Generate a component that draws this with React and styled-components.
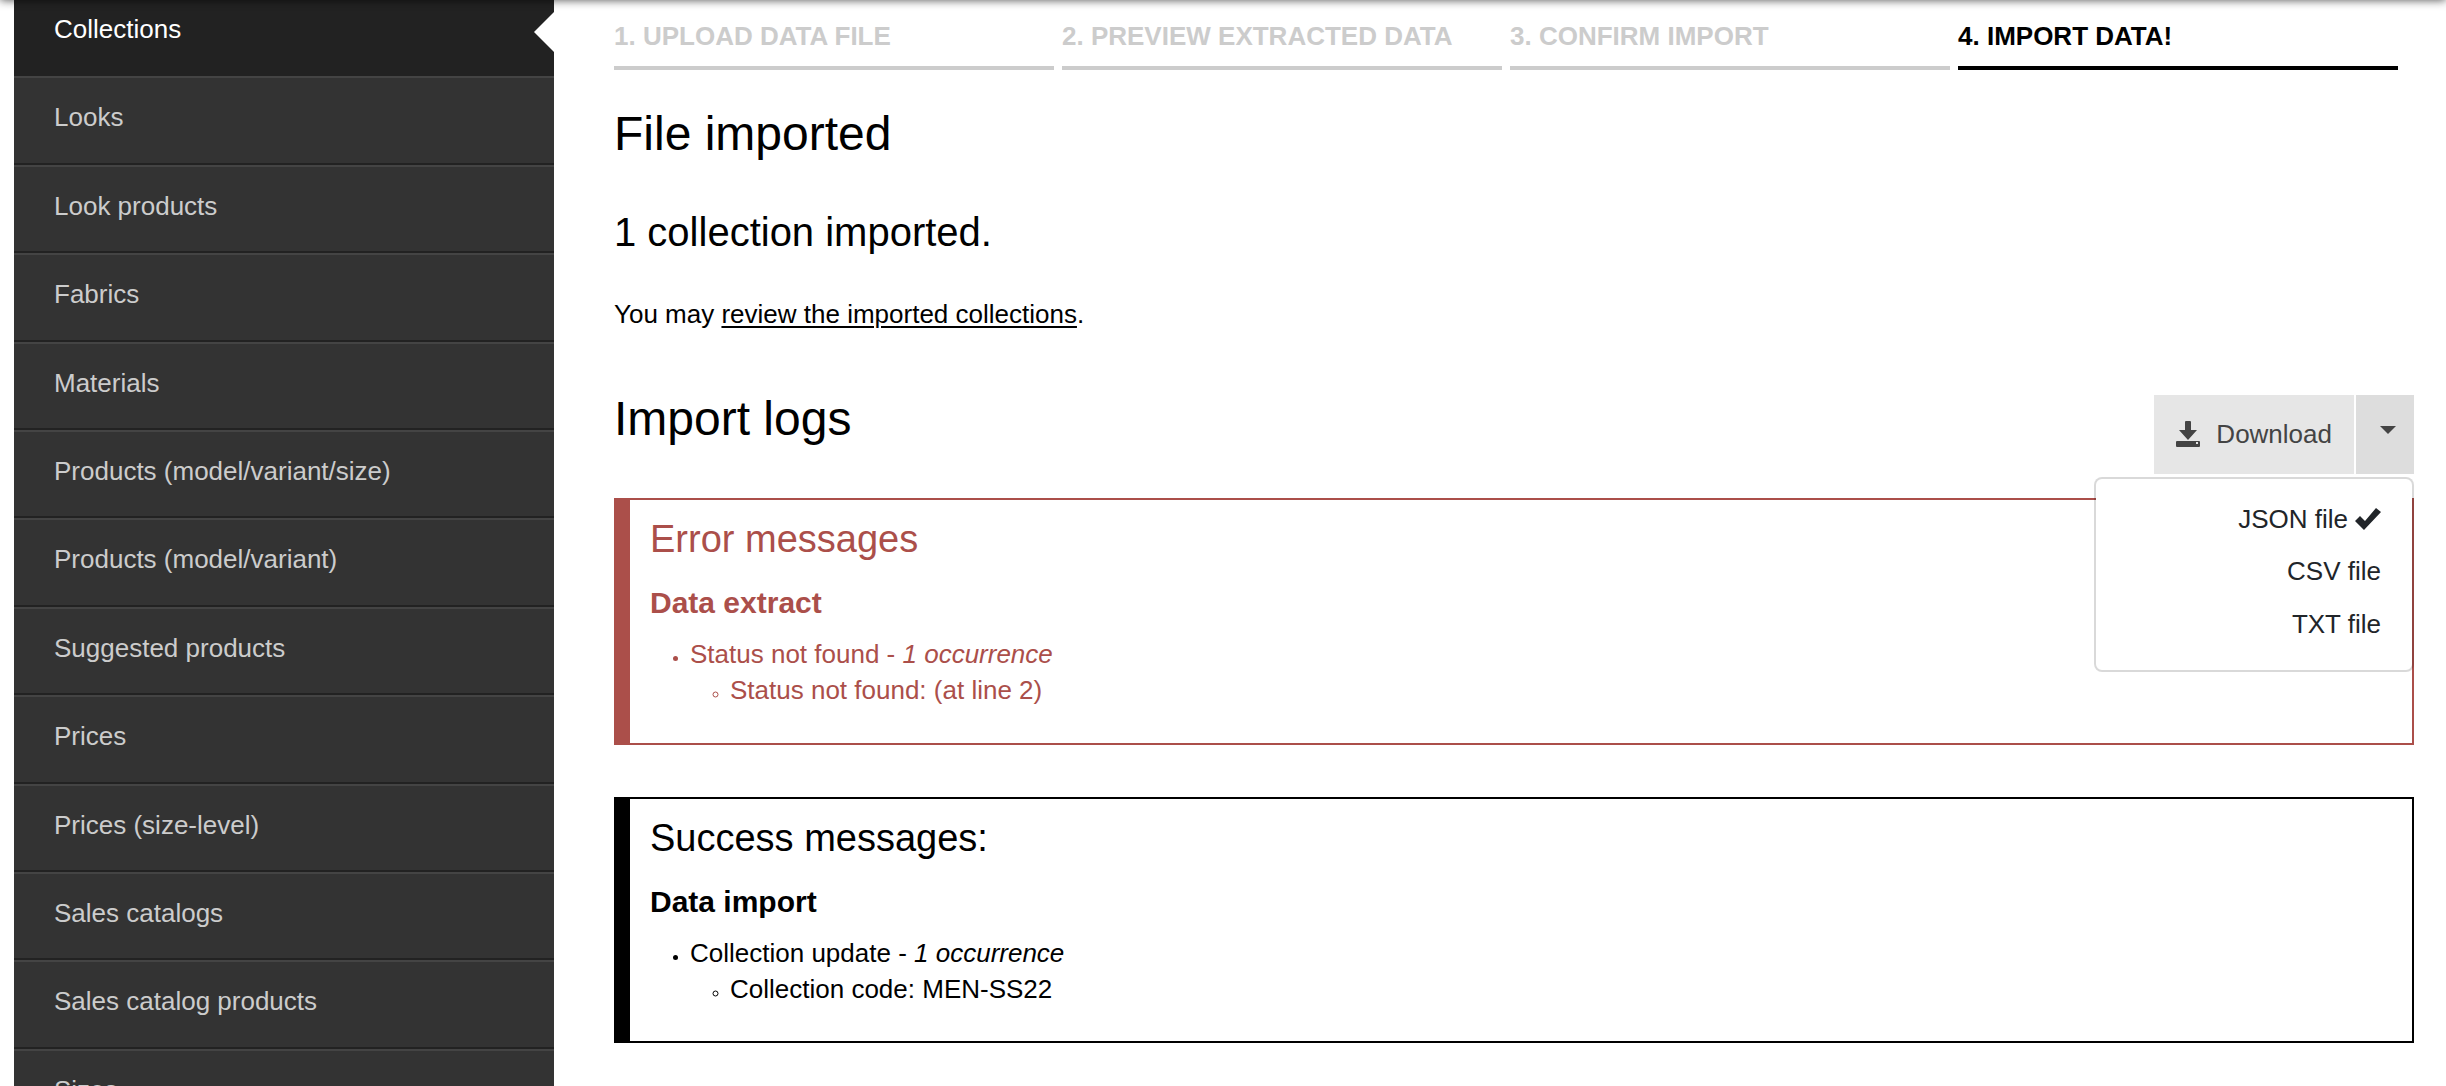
import styled, { createGlobalStyle } from "styled-components";

const navItems = [
  "Collections",
  "Looks",
  "Look products",
  "Fabrics",
  "Materials",
  "Products (model/variant/size)",
  "Products (model/variant)",
  "Suggested products",
  "Prices",
  "Prices (size-level)",
  "Sales catalogs",
  "Sales catalog products",
  "Sizes",
];

const steps = [
  "1. Upload data file",
  "2. Preview extracted data",
  "3. Confirm import",
  "4. Import data!",
];

const formats = ["JSON file", "CSV file", "TXT file"];

const DownloadIcon = () => (
  <svg width="24" height="26" viewBox="0 0 24 26" aria-hidden="true">
    <path
      fill="currentColor"
      fillRule="evenodd"
      d="M10 0h4a1 1 0 0 1 1 1v8h6L12 19 3 9h6V1a1 1 0 0 1 1-1zM1 20h22a1 1 0 0 1 1 1v4a1 1 0 0 1-1 1H1a1 1 0 0 1-1-1v-4a1 1 0 0 1 1-1zM20 21v2h2v-2z"
    />
  </svg>
);

const CheckIcon = () => (
  <svg width="26" height="22" viewBox="0 0 26 22" aria-hidden="true">
    <path fill="currentColor" d="M0 13l5-5 5 5L21 0l5 4L9 22z" />
  </svg>
);

const LogPanel = ({ tone, title, section, entry, detail }) => (
  <Panel $tone={tone}>
    <h3>{title}</h3>
    <h4>{section}</h4>
    <ul>
      <li>
        {entry} - <em>1 occurrence</em>
        <ul>
          <li>{detail}</li>
        </ul>
      </li>
    </ul>
  </Panel>
);

const App = () => {
  return (
    <>
      <GlobalStyle />
      <Page>
        <TopShadow />
        <Sidebar>
          {navItems.map((item, i) => (
            <NavLink key={item} href="#" $active={i === 0}>
              {item}
            </NavLink>
          ))}
        </Sidebar>
        <Content>
          <Steps>
            {steps.map((step, i) => (
              <Step key={step} $active={i === 3}>
                {step}
              </Step>
            ))}
          </Steps>
          <Title>File imported</Title>
          <Summary>1 collection imported.</Summary>
          <Review>
            You may <a href="#">review the imported collections</a>.
          </Review>
          <LogsHeader>
            <Title>Import logs</Title>
            <ButtonGroup>
              <DownloadButton type="button">
                <DownloadIcon />
                Download
              </DownloadButton>
              <ToggleButton type="button" aria-label="Choose file format" />
              <Menu>
                {formats.map((format, i) => (
                  <MenuItem key={format} href="#">
                    {format}
                    {i === 0 && <CheckIcon />}
                  </MenuItem>
                ))}
              </Menu>
            </ButtonGroup>
          </LogsHeader>
          <LogPanel
            tone="#ab4f4a"
            title="Error messages"
            section="Data extract"
            entry="Status not found"
            detail="Status not found: (at line 2)"
          />
          <LogPanel
            tone="#000"
            title="Success messages:"
            section="Data import"
            entry="Collection update"
            detail="Collection code: MEN-SS22"
          />
        </Content>
      </Page>
    </>
  );
};

export default App;

const GlobalStyle = createGlobalStyle`
  * {
    box-sizing: border-box;
  }
  body {
    margin: 0;
    background: #fff;
    color: #000;
    font-family: "Liberation Sans", Arial, sans-serif;
    font-size: 26px;
    line-height: 1.4;
  }
`;

const Page = styled.div`
  display: flex;
  height: 100vh;
  padding-left: 14px;
  overflow: hidden;
`;

/* sits just above the viewport, only its shadow shows */
const TopShadow = styled.div`
  position: fixed;
  top: -20px;
  left: 0;
  right: 0;
  z-index: 3;
  height: 20px;
  box-shadow: 0 0 10px rgba(0, 0, 0, 0.7);
`;

const Sidebar = styled.nav`
  flex: 0 0 540px;
  margin-top: -12px;
  background: #333;
`;

const NavLink = styled.a`
  display: block;
  position: relative;
  padding: 21px 40px 27px;
  border-top: 2px solid ${({ $active }) => ($active ? "#222" : "#444")};
  border-bottom: 2px solid #222;
  background: ${({ $active }) => ($active ? "#222" : "#333")};
  color: ${({ $active }) => ($active ? "#fff" : "#ccc")};
  text-decoration: none;
  &::after {
    content: "";
    display: ${({ $active }) => ($active ? "block" : "none")};
    position: absolute;
    top: 22px;
    right: 0;
    border: 20px solid transparent;
    border-left: 0;
    border-right-color: #fff;
  }
`;

const Content = styled.main`
  flex: 1;
  min-width: 0;
  padding: 18px 32px 0 60px;
`;

const Steps = styled.ol`
  display: grid;
  grid-template-columns: repeat(4, 1fr);
  gap: 8px;
  margin: 0 0 32px;
  padding: 0 16px 0 0;
  list-style: none;
`;

const Step = styled.li`
  padding-bottom: 12px;
  border-bottom: 4px solid ${({ $active }) => ($active ? "#000" : "#ccc")};
  color: ${({ $active }) => ($active ? "#000" : "#ccc")};
  font-weight: 700;
  text-transform: uppercase;
`;

const Title = styled.h1`
  margin: 0;
  font-size: 48px;
  font-weight: 400;
  line-height: 64px;
`;

const Summary = styled.h2`
  margin: 38px 0 0;
  font-size: 40px;
  font-weight: 400;
  line-height: 56px;
`;

const Review = styled.p`
  margin: 36px 0 54px;
  a {
    color: #000;
    text-underline-offset: 3px;
  }
`;

const LogsHeader = styled.div`
  display: flex;
  justify-content: space-between;
  align-items: flex-start;
  margin-bottom: 24px;
`;

const ButtonGroup = styled.div`
  display: flex;
  gap: 2px;
  position: relative;
  height: 79px;
  margin-top: 8px;
`;

const DownloadButton = styled.button`
  display: flex;
  align-items: center;
  gap: 16px;
  padding: 0 22px;
  border: 0;
  background: #e6e6e6;
  color: #444;
  font: inherit;
`;

const ToggleButton = styled.button`
  display: flex;
  align-items: center;
  justify-content: center;
  width: 58px;
  padding: 0 0 8px 6px;
  border: 0;
  background: #ddd;
  color: #444;
  &::before {
    content: "";
    border: 8px solid transparent;
    border-top-color: currentColor;
    border-bottom: 0;
  }
`;

const Menu = styled.div`
  position: absolute;
  top: 82px;
  right: 0;
  z-index: 2;
  width: 320px;
  padding: 14px 0 20px;
  border: 2px solid rgba(0, 0, 0, 0.15);
  border-radius: 8px;
  background: #fff;
  background-clip: padding-box;
`;

const MenuItem = styled.a`
  display: flex;
  align-items: center;
  justify-content: flex-end;
  gap: 7px;
  padding: 8px 31px;
  color: #212529;
  text-decoration: none;
`;

const Panel = styled.section`
  margin-bottom: 52px;
  padding: 12px 20px 34px;
  border: 2px solid ${({ $tone }) => $tone};
  border-left-width: 16px;
  color: ${({ $tone }) => $tone};
  h3 {
    margin: 0;
    font-size: 38px;
    font-weight: 400;
    line-height: 54px;
  }
  h4 {
    margin: 16px 0 12px;
    font-size: 30px;
    font-weight: 700;
    line-height: 42px;
  }
  ul {
    margin: 0;
    padding-left: 40px;
  }
  li::marker {
    font-size: 18px;
  }
`;
